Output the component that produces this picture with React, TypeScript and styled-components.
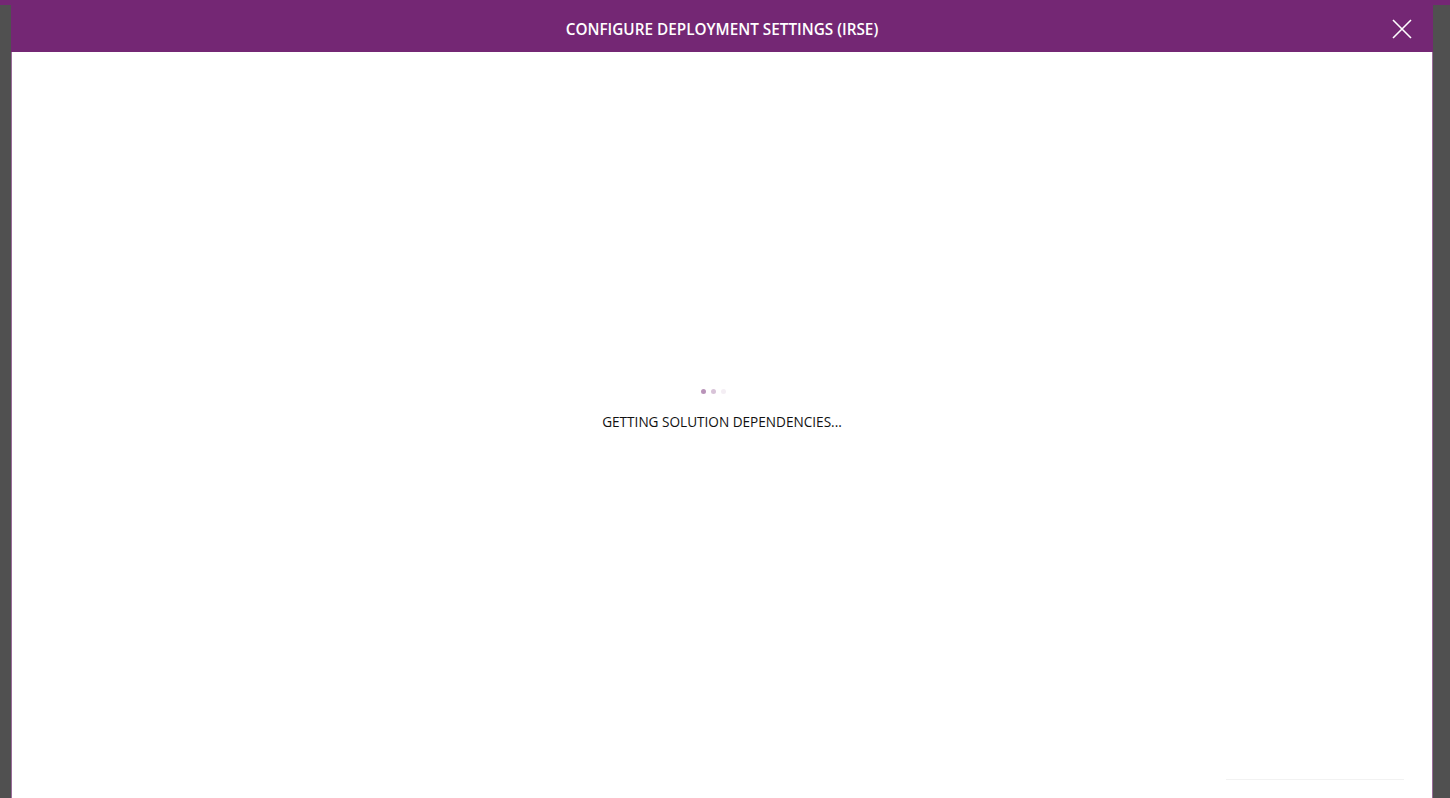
import styled, { createGlobalStyle } from "styled-components";

const GlobalStyle = createGlobalStyle`
  html, body {
    margin: 0;
    padding: 0;
    height: 100%;
    background: #505050;
    font-family: "Open Sans", "Liberation Sans", sans-serif;
  }
  #root {
    height: 100%;
  }
`;

const App = () => {
  return (
    <>
      <GlobalStyle />
      <Page>
        <TopStrip />
        <Backdrop>
          <Dialog>
            <Header>
              <Title>Configure Deployment Settings (IRSE)</Title>
              <CloseButton aria-label="Close">
                <svg width="20" height="20" viewBox="0 0 20 20">
                  <path d="M1 1L19 19M19 1L1 19" stroke="#fff" strokeWidth="1.6" />
                </svg>
              </CloseButton>
            </Header>
            <Body>
              <Loader>
                <Dots>
                  <Dot $opacity={0.5} />
                  <Dot $opacity={0.28} />
                  <Dot $opacity={0.08} />
                </Dots>
                <Message>Getting solution dependencies...</Message>
              </Loader>
              <Footer>
                <FooterLine />
              </Footer>
            </Body>
          </Dialog>
        </Backdrop>
      </Page>
    </>
  );
};

const Page = styled.div`
  height: 798px;
  display: flex;
  flex-direction: column;
  overflow: hidden;
`;

const TopStrip = styled.div`
  height: 5px;
  background: #742774;
  flex-shrink: 0;
`;

const Backdrop = styled.div`
  flex: 1;
  display: flex;
  padding: 0 17px 0 11px;
  min-height: 0;
`;

const Dialog = styled.div`
  flex: 1;
  display: flex;
  flex-direction: column;
  background: #fff;
  border-left: 1px solid #9a6c9a;
  border-right: 1px solid #9a6c9a;
  box-sizing: border-box;
`;

const Header = styled.header`
  position: relative;
  height: 47px;
  margin: -5px -1px 0;
  padding-top: 5px;
  background: #742774;
  display: flex;
  align-items: center;
  justify-content: center;
  flex-shrink: 0;
`;

const Title = styled.h1`
  margin: 0;
  color: #fff;
  font-size: 15.3px;
  font-weight: 600;
  text-transform: uppercase;
`;

const CloseButton = styled.button`
  position: absolute;
  right: 20px;
  top: 18px;
  width: 22px;
  height: 22px;
  padding: 0;
  border: none;
  background: transparent;
  display: flex;
  align-items: center;
  justify-content: center;
  cursor: pointer;
`;

const Body = styled.div`
  flex: 1;
  display: flex;
  flex-direction: column;
`;

const Loader = styled.div`
  flex: 1;
  display: flex;
  flex-direction: column;
  align-items: center;
  justify-content: center;
  gap: 18px;
  padding-bottom: 12px;
`;

const Dots = styled.div`
  display: flex;
  gap: 5px;
  padding-right: 18px;
`;

const Dot = styled.span<{ $opacity: number }>`
  width: 5px;
  height: 5px;
  border-radius: 50%;
  background: rgba(116, 39, 116, ${(p) => p.$opacity});
`;

const Message = styled.div`
  color: #111;
  font-size: 13.6px;
  text-transform: uppercase;
`;

const Footer = styled.footer`
  height: 19px;
  display: flex;
  justify-content: flex-end;
  padding-right: 28px;
  flex-shrink: 0;
`;

const FooterLine = styled.div`
  width: 178px;
  height: 1px;
  background: #f2f2f2;
`;

export default App;
